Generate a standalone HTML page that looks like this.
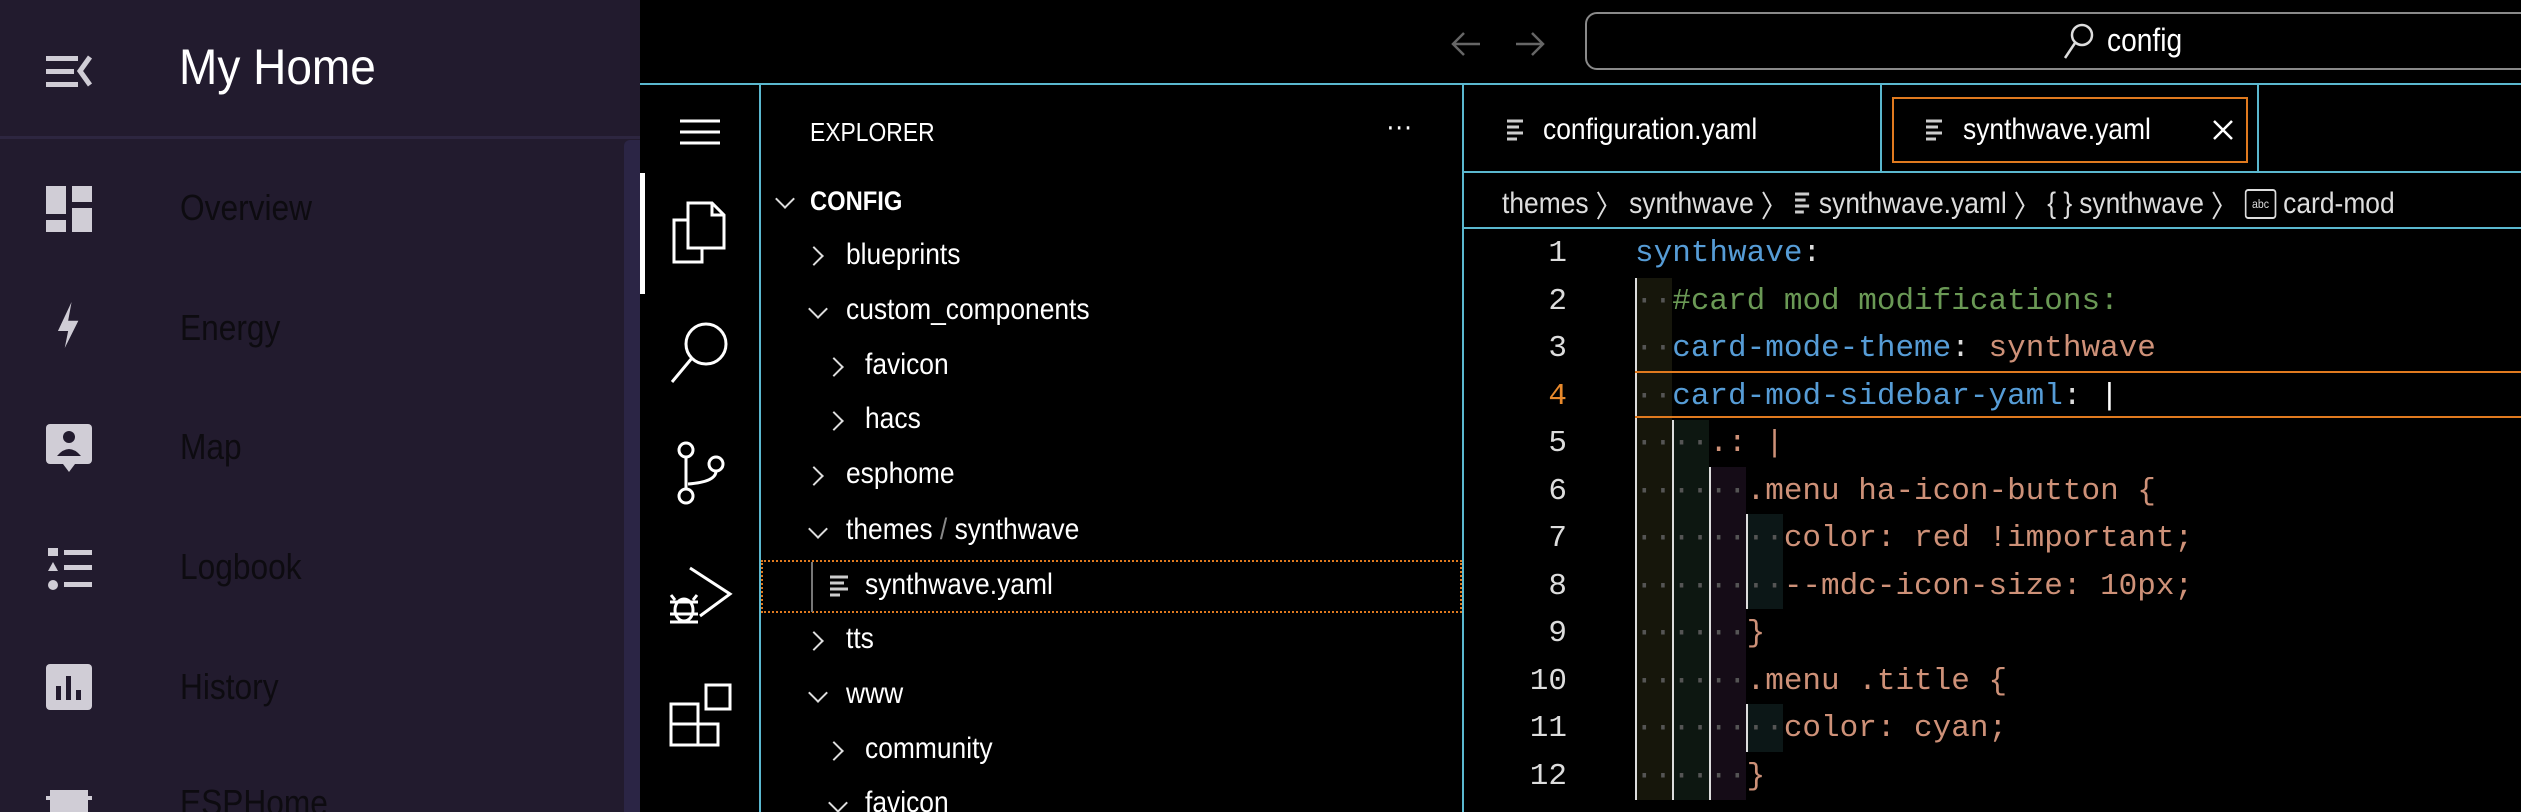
<!DOCTYPE html>
<html style="overflow:hidden;width:2521px;height:812px"><head><meta charset="utf-8"><style>
*{margin:0;padding:0;box-sizing:border-box}
body{width:2521px;height:812px;overflow:hidden;background:#000;position:relative;font-family:"Liberation Sans",sans-serif}
.a{position:absolute}
#side{left:0;top:0;width:640px;height:812px;background:#221b2e;overflow:hidden}
.lbl{position:absolute;left:180px;font-size:36px;color:#0d0b10;transform:scaleX(.88);transform-origin:left}
.ic{position:absolute;left:46px;width:46px;height:46px}
.ex{position:absolute;font-size:30px;color:#fff;white-space:nowrap;transform:scaleX(.88);transform-origin:left}
.chev{position:absolute;width:14px;height:14px;border-right:2px solid #ddd;border-bottom:2px solid #ddd}
.r{transform:rotate(-45deg)}.d{transform:rotate(45deg)}
.code{position:absolute;left:1635px;font-family:"Liberation Mono",monospace;font-size:31px;white-space:pre;line-height:47.5px}
.ln{position:absolute;left:1500px;width:67px;text-align:right;font-family:"Liberation Mono",monospace;font-size:31px;color:#ddd;line-height:47.5px}
.k{color:#569cd6}.c{color:#6a9955}.v{color:#ce9178}.w{color:#ddd}.dot{color:#555}
#bc{position:absolute;left:1502px;top:182px;height:44px;display:flex;align-items:center;gap:8px;font-size:30px;color:#ddd;white-space:nowrap;transform:scaleX(.88);transform-origin:left}
#bc svg{flex:none}
</style></head><body>
<div id="side" class="a">
 <svg class="a" style="left:46px;top:52px" width="48" height="40" viewBox="0 0 48 40"><rect x="0" y="4" width="32" height="5" fill="#d0cdd6"/><rect x="0" y="17" width="28" height="5" fill="#d0cdd6"/><rect x="0" y="30" width="32" height="5" fill="#d0cdd6"/><path d="M44 5 L34 19 L44 33" stroke="#d0cdd6" stroke-width="5" fill="none"/></svg>
 <div class="a" style="left:179px;top:38px;font-size:50px;color:#fff;transform:scaleX(.92);transform-origin:left">My Home</div>
 <div class="a" style="left:0;top:136px;width:640px;height:3px;background:#2d2640"></div>
 <div class="a" style="left:624px;top:140px;width:16px;height:672px;background:#2b2545;border-radius:6px 0 0 0"></div>
 <svg class="ic" style="top:186px" viewBox="0 0 46 46"><rect x="0" y="0" width="20" height="28" fill="#d0cdd6"/><rect x="26" y="0" width="20" height="16" fill="#d0cdd6"/><rect x="0" y="34" width="20" height="12" fill="#d0cdd6"/><rect x="26" y="22" width="20" height="24" fill="#d0cdd6"/></svg>
 <div class="lbl" style="top:187px">Overview</div>
 <svg class="ic" style="top:302px" viewBox="0 0 46 54"><path d="M26 0 L10 34 H22 L18 54 L34 22 H22 Z" fill="#d0cdd6"/></svg>
 <div class="lbl" style="top:307px">Energy</div>
 <svg class="ic" style="top:424px;height:52px" viewBox="0 0 46 52"><rect x="0" y="0" width="46" height="40" rx="4" fill="#d0cdd6"/><path d="M17 40 L23 48 L29 40Z" fill="#d0cdd6"/><circle cx="23" cy="13" r="6" fill="#221b2e"/><path d="M11 32 Q23 18 35 32Z" fill="#221b2e"/></svg>
 <div class="lbl" style="top:426px">Map</div>
 <svg class="ic" style="top:546px" viewBox="0 0 46 46"><rect x="2" y="2" width="10" height="8" fill="#d0cdd6"/><rect x="18" y="4" width="28" height="5" fill="#d0cdd6"/><path d="M7 16 L12 25 H2Z" fill="#d0cdd6"/><rect x="18" y="19" width="28" height="5" fill="#d0cdd6"/><circle cx="7" cy="39" r="5" fill="#d0cdd6"/><rect x="18" y="36" width="28" height="5" fill="#d0cdd6"/></svg>
 <div class="lbl" style="top:546px">Logbook</div>
 <svg class="ic" style="top:664px" viewBox="0 0 46 46"><rect x="0" y="0" width="46" height="46" rx="4" fill="#d0cdd6"/><rect x="10" y="22" width="5" height="14" fill="#221b2e"/><rect x="20" y="12" width="5" height="24" fill="#221b2e"/><rect x="30" y="26" width="5" height="10" fill="#221b2e"/></svg>
 <div class="lbl" style="top:666px">History</div>
 <svg class="ic" style="top:790px" viewBox="0 0 46 46"><rect x="4" y="0" width="38" height="46" fill="#d0cdd6"/><rect x="0" y="6" width="46" height="4" fill="#d0cdd6"/></svg>
 <div class="lbl" style="top:782px">ESPHome</div>
</div>

<svg class="a" style="left:1450px;top:28px" width="100" height="32" viewBox="0 0 100 32"><path d="M30 16 H4 M14 5 L3 16 L14 27" stroke="#666" stroke-width="2.5" fill="none"/><path d="M66 16 H92 M82 5 L93 16 L82 27" stroke="#666" stroke-width="2.5" fill="none"/></svg>
<div class="a" style="left:1585px;top:12px;width:960px;height:58px;border:2px solid #8a8a8a;border-radius:12px"></div>
<svg class="a" style="left:2062px;top:22px" width="34" height="38" viewBox="0 0 34 38"><circle cx="20" cy="13" r="10" stroke="#ddd" stroke-width="2.5" fill="none"/><path d="M13 21 L3 36" stroke="#ddd" stroke-width="2.5"/></svg>
<div class="a" style="left:2107px;top:22px;font-size:32px;color:#fff;transform:scaleX(.88);transform-origin:left">config</div>
<div class="a" style="left:640px;top:83px;width:1881px;height:2px;background:#5bb8cf"></div>

<div class="a" style="left:759px;top:85px;width:2px;height:727px;background:#5bb8cf"></div>
<div class="a" style="left:640px;top:173px;width:5px;height:121px;background:#fff"></div>
<svg class="a" style="left:678px;top:118px" width="44" height="28"><path d="M2 3H42M2 14H42M2 25H42" stroke="#fff" stroke-width="3"/></svg>
<svg class="a" style="left:668px;top:200px" width="60" height="66" viewBox="0 0 60 66"><path d="M20 3 H44 L56 15 V48 H20 Z M44 3 V15 H56" stroke="#fff" stroke-width="3" fill="none"/><path d="M20 20 H6 V62 H34 V48" stroke="#fff" stroke-width="3" fill="none"/></svg>
<svg class="a" style="left:668px;top:320px" width="64" height="66" viewBox="0 0 64 66"><circle cx="38" cy="24" r="20" stroke="#fff" stroke-width="3" fill="none"/><path d="M24 38 L4 62" stroke="#fff" stroke-width="3"/></svg>
<svg class="a" style="left:674px;top:440px" width="56" height="66" viewBox="0 0 56 66"><circle cx="12" cy="10" r="7" stroke="#fff" stroke-width="3" fill="none"/><circle cx="12" cy="56" r="7" stroke="#fff" stroke-width="3" fill="none"/><circle cx="42" cy="24" r="7" stroke="#fff" stroke-width="3" fill="none"/><path d="M12 17V49M42 31 Q42 42 14 44" stroke="#fff" stroke-width="3" fill="none"/></svg>
<svg class="a" style="left:668px;top:562px" width="66" height="66" viewBox="0 0 66 66"><path d="M22 6 L62 32 L32 54" stroke="#fff" stroke-width="3" fill="none"/><ellipse cx="16" cy="48" rx="9" ry="11" stroke="#fff" stroke-width="3" fill="none"/><path d="M2 40H30M2 52H30M2 60H30M7 38L3 33M25 38L29 33" stroke="#fff" stroke-width="3"/></svg>
<svg class="a" style="left:668px;top:682px" width="66" height="66" viewBox="0 0 66 66"><rect x="38" y="3" width="24" height="24" stroke="#fff" stroke-width="3" fill="none"/><path d="M3 22 H30 V63 H3 Z M3 42 H50 V63 H30" stroke="#fff" stroke-width="3" fill="none"/></svg>

<div class="ex" style="left:810px;top:117px;font-size:26px">EXPLORER</div>
<div class="ex" style="left:1386px;top:110px;font-size:30px">···</div>
<div class="chev d" style="left:778px;top:192px"></div>
<div class="ex" style="left:810px;top:186px;font-size:27px;font-weight:bold">CONFIG</div>
<div class="chev r" style="left:807px;top:249px"></div><div class="ex" style="left:846px;top:238px">blueprints</div>
<div class="chev d" style="left:811px;top:302px"></div><div class="ex" style="left:846px;top:293px">custom_components</div>
<div class="chev r" style="left:827px;top:360px"></div><div class="ex" style="left:865px;top:348px">favicon</div>
<div class="chev r" style="left:827px;top:414px"></div><div class="ex" style="left:865px;top:402px">hacs</div>
<div class="chev r" style="left:807px;top:469px"></div><div class="ex" style="left:846px;top:457px">esphome</div>
<div class="chev d" style="left:811px;top:522px"></div><div class="ex" style="left:846px;top:513px">themes <span style="color:#888">/</span> synthwave</div>
<div class="a" style="left:761px;top:560px;width:701px;height:53px;border:2px dotted #e07a1f"></div>
<div class="a" style="left:811px;top:562px;width:2px;height:50px;background:#777"></div>
<svg class="a" style="left:828px;top:573px" width="22" height="26"><path d="M2 4H20M2 10H16M2 16H20M2 22H12" stroke="#ccc" stroke-width="3"/></svg>
<div class="ex" style="left:865px;top:568px">synthwave.yaml</div>
<div class="chev r" style="left:807px;top:634px"></div><div class="ex" style="left:846px;top:622px">tts</div>
<div class="chev d" style="left:811px;top:686px"></div><div class="ex" style="left:846px;top:677px">www</div>
<div class="chev r" style="left:827px;top:744px"></div><div class="ex" style="left:865px;top:732px">community</div>
<div class="chev d" style="left:831px;top:796px"></div><div class="ex" style="left:865px;top:786px">favicon</div>

<div class="a" style="left:1462px;top:85px;width:2px;height:727px;background:#5bb8cf"></div>
<div class="a" style="left:1880px;top:85px;width:2px;height:87px;background:#5bb8cf"></div>
<div class="a" style="left:2257px;top:85px;width:2px;height:87px;background:#5bb8cf"></div>
<div class="a" style="left:1464px;top:171px;width:1057px;height:2px;background:#5bb8cf"></div>
<div class="a" style="left:1464px;top:227px;width:1057px;height:2px;background:#5bb8cf"></div>
<svg class="a" style="left:1506px;top:118px" width="20" height="26"><path d="M1 3H17M1 9H13M1 15H17M1 21H11" stroke="#ccc" stroke-width="3"/></svg>
<div class="ex" style="left:1543px;top:113px">configuration.yaml</div>
<div class="a" style="left:1892px;top:97px;width:356px;height:66px;border:2px solid #e07a1f"></div>
<svg class="a" style="left:1925px;top:118px" width="20" height="26"><path d="M1 3H17M1 9H13M1 15H17M1 21H11" stroke="#ccc" stroke-width="3"/></svg>
<div class="ex" style="left:1963px;top:113px">synthwave.yaml</div>
<svg class="a" style="left:2212px;top:119px" width="22" height="22"><path d="M2 2L20 20M20 2L2 20" stroke="#fff" stroke-width="2.5"/></svg>

<div id="bc"><span>themes</span><span>〉</span><span>synthwave</span><span>〉</span><svg width="20" height="26"><path d="M1 3H17M1 9H13M1 15H17M1 21H11" stroke="#ccc" stroke-width="3"/></svg><span>synthwave.yaml</span><span>〉</span><span>{ }</span><span>synthwave</span><span>〉</span><svg width="36" height="30"><rect x="1" y="1" width="34" height="28" rx="3" stroke="#ddd" stroke-width="2" fill="none"/><text x="18" y="19" font-size="12" fill="#ddd" text-anchor="middle" font-family="Liberation Sans">abc</text></svg><span>card-mod</span></div>

<div class="a" style="left:1635px;top:278px;width:37px;height:522px;background:#16160b"></div>
<div class="a" style="left:1635px;top:278px;width:2px;height:522px;background:#ddd"></div>
<div class="a" style="left:1672px;top:420px;width:37px;height:380px;background:#0d1711"></div>
<div class="a" style="left:1672px;top:420px;width:2px;height:380px;background:#ddd"></div>
<div class="a" style="left:1709px;top:467px;width:37px;height:333px;background:#150c17"></div>
<div class="a" style="left:1709px;top:467px;width:2px;height:333px;background:#ddd"></div>
<div class="a" style="left:1746px;top:514px;width:37px;height:95px;background:#0c1717"></div>
<div class="a" style="left:1746px;top:514px;width:2px;height:95px;background:#ddd"></div>
<div class="a" style="left:1746px;top:704px;width:37px;height:48px;background:#0c1717"></div>
<div class="a" style="left:1746px;top:704px;width:2px;height:48px;background:#ddd"></div>
<div class="a" style="left:1635px;top:371px;width:886px;height:47px;border-top:2px solid #e07a1f;border-bottom:2px solid #e07a1f"></div>

<div class="ln" style="top:230px">1<br>2<br>3<br><span style="color:#e8892c">4</span><br>5<br>6<br>7<br>8<br>9<br>10<br>11<br>12</div>
<div class="code" style="top:230px"><span class="k">synthwave</span><span class="w">:</span>
<span class="dot">··</span><span class="c">#card mod modifications:</span>
<span class="dot">··</span><span class="k">card-mode-theme</span><span class="w">: </span><span class="v">synthwave</span>
<span class="dot">··</span><span class="k">card-mod-sidebar-yaml</span><span class="w">: </span><span style="color:#fff">|</span>
<span class="dot">····</span><span class="v">.: |</span>
<span class="dot">······</span><span class="v">.menu ha-icon-button {</span>
<span class="dot">········</span><span class="v">color: red !important;</span>
<span class="dot">········</span><span class="v">--mdc-icon-size: 10px;</span>
<span class="dot">······</span><span class="v">}</span>
<span class="dot">······</span><span class="v">.menu .title {</span>
<span class="dot">········</span><span class="v">color: cyan;</span>
<span class="dot">······</span><span class="v">}</span></div>
</body></html>
